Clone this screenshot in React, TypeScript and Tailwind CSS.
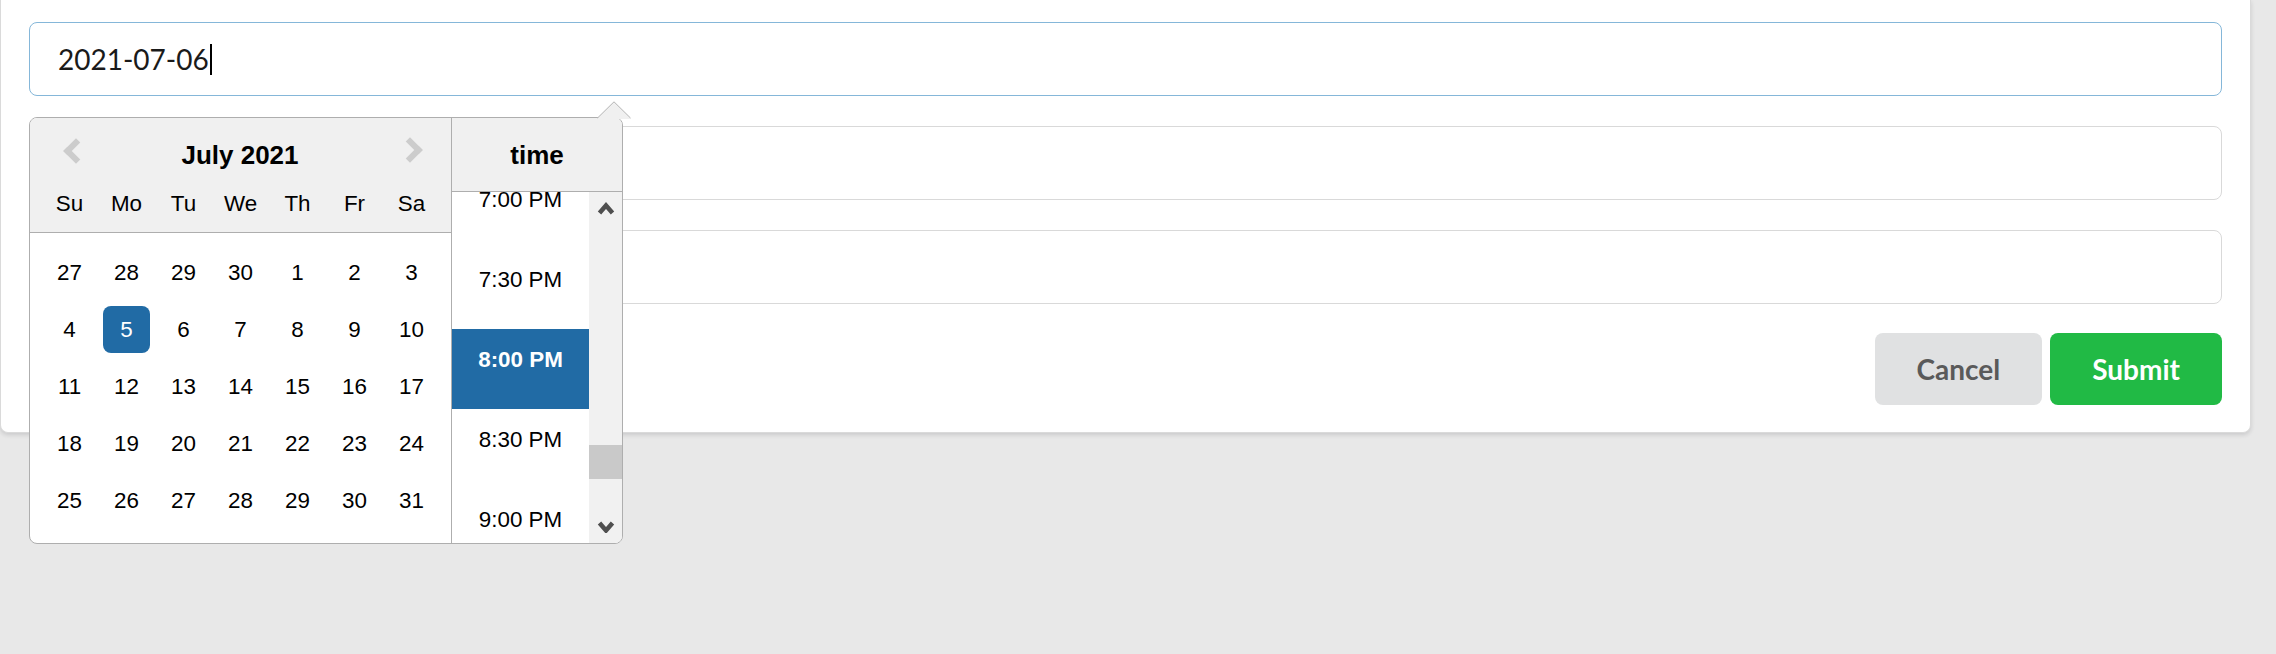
import React from "react";

const weekDays = ["Su", "Mo", "Tu", "We", "Th", "Fr", "Sa"];

const weeks: number[][] = [
  [27, 28, 29, 30, 1, 2, 3],
  [4, 5, 6, 7, 8, 9, 10],
  [11, 12, 13, 14, 15, 16, 17],
  [18, 19, 20, 21, 22, 23, 24],
  [25, 26, 27, 28, 29, 30, 31],
];

const times = ["7:00 PM", "7:30 PM", "8:00 PM", "8:30 PM", "9:00 PM"];

function DatePickerPopup() {
  return (
    <div className="absolute left-0 top-[95px] z-10 flex rounded-[8px] border border-[#aeaeae] bg-white font-['Liberation_Sans',Arial,sans-serif] text-black">
      {/* popper arrow */}
      <svg
        className="absolute left-[567px] top-[-17px]"
        width="34"
        height="18"
        viewBox="0 0 34 18"
      >
        <polygon points="0.5,17 17,0.8 33.5,17 33.5,18 0.5,18" fill="#f0f0f0" />
        <polyline
          points="0.5,17 17,0.8 33.5,17"
          fill="none"
          stroke="#b4b4b4"
          strokeWidth="1"
        />
      </svg>

      {/* month */}
      <div className="flex w-[421px] flex-col">
        <div className="rounded-tl-[7px] border-b border-[#aeaeae] bg-[#f0f0f0] pt-[22px]">
          <div className="flex h-[30px] items-start">
            <div className="ml-[33px] mt-[2px] flex h-[18px] w-[26px] justify-center">
              <div className="h-[18px] w-[18px] rotate-[225deg] border-r-[6px] border-t-[6px] border-[#ccc]" />
            </div>
            <div className="flex-1 pr-[6px] text-center text-[26px] font-bold leading-[30px]">
              July 2021
            </div>
            <div className="mr-[28px] mt-[1px] flex h-[18px] w-[26px] justify-center">
              <div className="h-[18px] w-[18px] rotate-45 border-r-[6px] border-t-[6px] border-[#ccc]" />
            </div>
          </div>
          <div className="mt-[5px] flex px-[11px]">
            {weekDays.map((d) => (
              <div
                key={d}
                className="m-[5px] flex h-[47px] w-[47px] items-center justify-center text-[22.4px]"
              >
                {d}
              </div>
            ))}
          </div>
        </div>
        <div className="flex flex-col px-[11px] pt-[11px]">
          {weeks.map((week, i) => (
            <div key={i} className="flex">
              {week.map((day, j) => {
                const selected = i === 1 && day === 5;
                return (
                  <div
                    key={j}
                    className={`m-[5px] flex h-[47px] w-[47px] items-center justify-center rounded-[8px] text-[22.4px] ${
                      selected ? "bg-[#216ba5] text-white" : "text-black"
                    }`}
                  >
                    {day}
                  </div>
                );
              })}
            </div>
          ))}
        </div>
      </div>

      {/* time */}
      <div className="flex w-[171px] flex-col border-l border-[#aeaeae]">
        <div className="h-[74px] rounded-tr-[7px] border-b border-[#aeaeae] bg-[#f0f0f0] pt-[22px] text-center text-[26px] font-bold leading-[30px]">
          time
        </div>
        <div className="flex h-[351px]">
          <div className="w-[137px] overflow-hidden">
            <div className="-mt-[23px]">
              {times.map((t) => {
                const selected = t === "8:00 PM";
                return (
                  <div
                    key={t}
                    className={`h-[80px] pt-[11px] text-center text-[22.4px] leading-[40px] ${
                      selected ? "bg-[#216ba5] font-bold text-white" : ""
                    }`}
                  >
                    {t}
                  </div>
                );
              })}
            </div>
          </div>
          <div className="flex w-[33px] flex-col items-center rounded-br-[7px] bg-[#f1f1f1]">
            <svg className="mt-[10px]" width="18" height="13" viewBox="0 0 18 13">
              <polyline
                points="2.5,11 9,3.5 15.5,11"
                fill="none"
                stroke="#4f4f4f"
                strokeWidth="4.5"
              />
            </svg>
            <div className="mt-[230px] h-[34px] w-full bg-[#c9c9c9]" />
            <svg className="mt-[42px]" width="18" height="12" viewBox="0 0 18 12">
              <polyline
                points="2.5,2 9,9.5 15.5,2"
                fill="none"
                stroke="#4f4f4f"
                strokeWidth="4.5"
              />
            </svg>
          </div>
        </div>
      </div>
    </div>
  );
}

export default function App() {
  return (
    <div className="min-h-screen w-full bg-[#e8e8e8] font-['Lato',sans-serif]">
      <div className="w-[2251px] rounded-b-[8px] border-x border-b border-[#dadada] bg-white px-[28px] pb-[27px] pt-[22px] shadow-[0_2px_4px_0_rgba(34,36,38,0.15)]">
        <div className="relative">
          <div className="flex h-[74px] items-center rounded-[8px] border border-[#85b7d9] px-[28px] text-[28px] text-[#1a1a1a]">
            <span>2021-07-06</span>
            <span className="ml-[1px] h-[31px] w-[2px] bg-black" />
          </div>
          <DatePickerPopup />
        </div>

        <div className="mt-[30px] h-[74px] rounded-[8px] border border-[#d9d9d9]" />
        <div className="mt-[30px] h-[74px] rounded-[8px] border border-[#d9d9d9]" />

        <div className="mt-[29px] flex justify-end gap-[8px]">
          <button className="h-[72px] rounded-[8px] bg-[#e0e1e2] px-[42px] text-[28px] font-bold text-[#5a5a5a]">
            Cancel
          </button>
          <button className="h-[72px] rounded-[8px] bg-[#21ba45] px-[42px] text-[28px] font-bold text-white">
            Submit
          </button>
        </div>
      </div>
    </div>
  );
}
